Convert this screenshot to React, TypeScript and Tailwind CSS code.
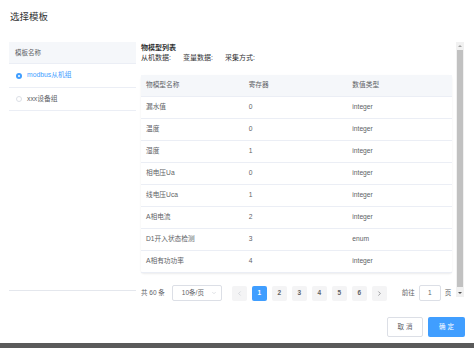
import { ChevronDown, ChevronLeft, ChevronRight } from "lucide-react";

const rows = [
  { name: "漏水值", reg: "0", type: "integer" },
  { name: "温度", reg: "0", type: "integer" },
  { name: "湿度", reg: "1", type: "integer" },
  { name: "相电压Ua", reg: "0", type: "integer" },
  { name: "线电压Uca", reg: "1", type: "integer" },
  { name: "A相电流", reg: "2", type: "integer" },
  { name: "D1开入状态检测", reg: "3", type: "enum" },
  { name: "A相有功功率", reg: "4", type: "integer" },
];

const font = { fontFamily: '"Liberation Sans", "Noto Sans CJK SC", sans-serif' };

export default function App() {
  return (
    <div className="w-[474px] h-[348px] flex flex-col bg-[#5a5a5a] pb-[5px]" style={font}>
      <div className="flex-1 bg-white flex flex-col">
        {/* title */}
        <div className="h-[40px] pl-[10px] pt-[10px] text-[9.5px] leading-[13px] text-[#303133]">选择模板</div>

        {/* body */}
        <div className="flex pl-[9px] pr-[10px] h-[258px]">
          {/* templates */}
          <div className="w-[127px] mt-[2px] h-[249px] border-b border-[#e4e7ed] flex flex-col">
            <div className="h-[22px] bg-[#f5f7fa] flex items-center pl-[6px] text-[6.5px] text-[#606266] border-b border-[#ebeef5]">模板名称</div>
            <div className="h-[24px] flex items-center pl-[7px] gap-[5px] border-b border-[#ebeef5] text-[6.8px] text-[#409eff]">
              <span className="w-[6px] h-[6px] rounded-full bg-[#409eff] flex items-center justify-center">
                <span className="w-[2px] h-[2px] rounded-full bg-white" />
              </span>
              modbus从机组
            </div>
            <div className="h-[23px] flex items-center pl-[7px] gap-[5px] border-b border-[#ebeef5] text-[6.8px] text-[#606266]">
              <span className="w-[6px] h-[6px] rounded-full border border-[#dcdfe6]" />
              xxx设备组
            </div>
          </div>

          {/* model list */}
          <div className="w-[311px] ml-[5px] flex flex-col">
            <div className="mt-[3px] text-[7px] leading-[9px] font-bold text-[#303133]">物模型列表</div>
            <div className="mt-[1px] flex gap-[12px] text-[7px] leading-[9px] text-[#303133]">
              <span>从机数据:</span>
              <span>变量数据:</span>
              <span>采集方式:</span>
            </div>
            <div className="mt-[13px] rounded-[3px] shadow-[0_1px_2px_rgba(0,0,0,0.08)] text-[6.7px] text-[#606266]">
              <div className="grid grid-cols-3 h-[22px] items-center bg-[#f5f7fa] border-b border-[#ebeef5]">
                <span className="pl-[5px]">物模型名称</span>
                <span className="pl-[4px]">寄存器</span>
                <span className="pl-[4px]">数值类型</span>
              </div>
              {rows.map((r) => (
                <div key={r.name} className="grid grid-cols-3 h-[22px] items-center border-b border-[#ebeef5]">
                  <span className="pl-[5px]">{r.name}</span>
                  <span className="pl-[4px]">{r.reg}</span>
                  <span className="pl-[4px]">{r.type}</span>
                </div>
              ))}
            </div>

            {/* pagination */}
            <div className="mt-[12px] flex items-center text-[6.5px] text-[#606266]">
              <span>共 60 条</span>
              <div className="ml-[7px] w-[50px] h-[16px] border border-[#dcdfe6] rounded-[2px] flex items-center justify-between pl-[9px] pr-[4px]">
                <span>10条/页</span>
                <ChevronDown className="w-[6px] h-[6px] text-[#c0c4cc]" />
              </div>
              <div className="ml-[10px] flex gap-[5px]">
                <span className="w-[15px] h-[15px] bg-[#f4f4f5] rounded-[2px] flex items-center justify-center">
                  <ChevronLeft className="w-[7px] h-[7px] text-[#c0c4cc]" />
                </span>
                <span className="w-[15px] h-[15px] bg-[#409eff] text-white font-bold rounded-[2px] flex items-center justify-center">1</span>
                {["2", "3", "4", "5", "6"].map((p) => (
                  <span key={p} className="w-[15px] h-[15px] bg-[#f4f4f5] rounded-[2px] flex items-center justify-center font-bold text-[#606266]">{p}</span>
                ))}
                <span className="w-[15px] h-[15px] bg-[#f4f4f5] rounded-[2px] flex items-center justify-center">
                  <ChevronRight className="w-[7px] h-[7px] text-[#606266]" />
                </span>
              </div>
              <span className="ml-[15px]">前往</span>
              <span className="ml-[4px] w-[22px] h-[16px] border border-[#dcdfe6] rounded-[2px] flex items-center justify-center">1</span>
              <span className="ml-[4px]">页</span>
            </div>
          </div>

          {/* scrollbar */}
          <div className="ml-[4px] w-[8px] mt-[2px] h-[255px] bg-[#f1f1f1] flex flex-col items-center">
            <span className="h-[7px] flex items-center justify-center">
              <span className="w-0 h-0 border-l-[2px] border-r-[2px] border-b-[2px] border-l-transparent border-r-transparent border-b-[#a3a3a3]" />
            </span>
            <span className="flex-1 w-[6px] bg-[#c1c1c1] my-[1px]" />
            <span className="h-[9px] flex items-center justify-center">
              <span className="w-0 h-0 border-l-[2px] border-r-[2px] border-t-[2px] border-l-transparent border-r-transparent border-t-[#505050]" />
            </span>
          </div>
        </div>

        {/* footer */}
        <div className="flex justify-end gap-[5px] pr-[9px] mt-[19px]">
          <button className="w-[36px] h-[20px] border border-[#dcdfe6] rounded-[2px] text-[6.5px] text-[#606266] bg-white">取 消</button>
          <button className="w-[37px] h-[20px] rounded-[2px] text-[6.5px] text-white bg-[#409eff]">确 定</button>
        </div>
      </div>
    </div>
  );
}
